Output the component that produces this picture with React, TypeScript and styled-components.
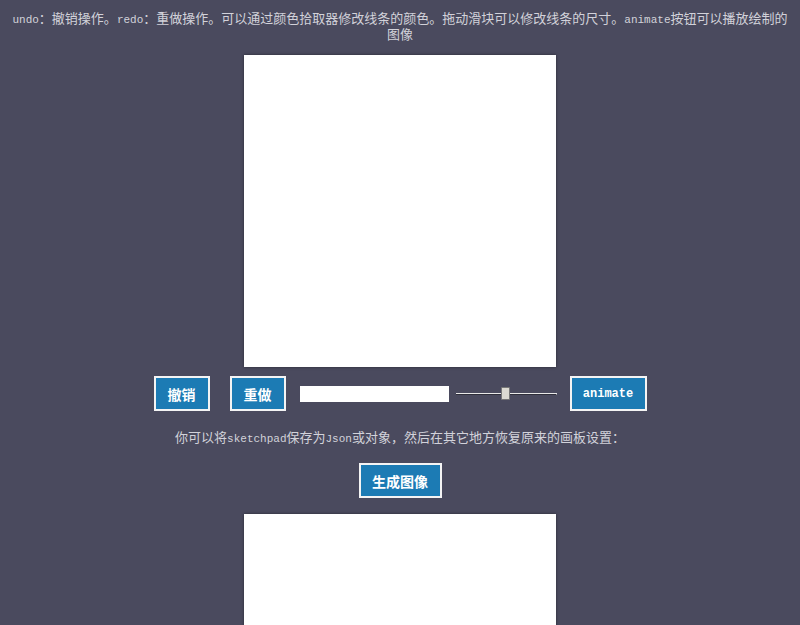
import styled, { createGlobalStyle } from "styled-components";

const GlobalStyle = createGlobalStyle`
  html, body {
    margin: 0;
    padding: 0;
    background: #4a4a5e;
  }
  body {
    font-family: "Noto Sans CJK SC", sans-serif;
  }
`;

const Page = styled.div`
  width: 800px;
  display: flex;
  flex-direction: column;
  align-items: center;
  padding-top: 10px;
`;

const Note = styled.p<{ $gap: number }>`
  margin: 0 0 ${(p) => p.$gap}px;
  padding: 0;
  color: #d2d2da;
  font-family: "Noto Sans CJK SC", sans-serif;
  font-size: 13px;
  line-height: 16px;
  text-align: center;
`;

const Latin = styled.span`
  font-family: "Liberation Mono", monospace;
  font-size: 11px;
  line-height: 1;
`;

const Pad = styled.div`
  width: 312px;
  height: 312px;
  background: #fff;
  box-shadow: 0 0 3px rgba(0, 0, 0, 0.45);
  flex-shrink: 0;
`;

const Toolbar = styled.div`
  display: flex;
  align-items: center;
  margin: 9px 0 18px;
`;

const Button = styled.button<{ $width: number; $mono?: boolean }>`
  width: ${(p) => p.$width}px;
  height: 35px;
  margin: 0 10px 0 10px;
  padding: 0;
  background: #1c7bb4;
  border: 2px solid #f4f4f4;
  color: #fff;
  font-family: ${(p) =>
    p.$mono ? `"Liberation Mono", monospace` : `"Noto Sans CJK SC", sans-serif`};
  font-size: ${(p) => (p.$mono ? 12 : 14)}px;
  font-weight: bold;
  line-height: 1;
  cursor: pointer;
`;

const TextBox = styled.input`
  width: 149px;
  height: 16px;
  margin: 0 3px 0 4px;
  padding: 0;
  border: none;
  background: #fff;
`;

const Slider = styled.input`
  -webkit-appearance: none;
  appearance: none;
  width: 101px;
  height: 16px;
  margin: 0 3px 0 4px;
  background: transparent;

  &::-webkit-slider-runnable-track {
    height: 2px;
    background: #e8e8e8;
    border-bottom: 1px solid #2e2e3a;
    border-right: 1px solid #e8e8e8;
  }

  &::-webkit-slider-thumb {
    -webkit-appearance: none;
    width: 9px;
    height: 13px;
    margin-top: -6px;
    background: #dcdad2;
    border: 1px solid #777;
    border-radius: 1px;
  }
`;

const BottomPad = styled(Pad)`
  margin-top: 16px;
`;

export default function App() {
  return (
    <>
      <GlobalStyle />
      <Page>
        <Note $gap={13}>
          <Latin>undo</Latin>：撤销操作。<Latin>redo</Latin>：重做操作。可以通过颜色拾取器修改线条的颜色。拖动滑块可以修改线条的尺寸。
          <Latin>animate</Latin>按钮可以播放绘制的
          <br />
          图像
        </Note>
        <Pad />
        <Toolbar>
          <Button $width={56}>撤销</Button>
          <Button $width={56}>重做</Button>
          <TextBox type="text" />
          <Slider type="range" min={0} max={100} defaultValue={50} />
          <Button $width={77} $mono>
            animate
          </Button>
        </Toolbar>
        <Note $gap={18}>
          你可以将<Latin>sketchpad</Latin>保存为<Latin>Json</Latin>或对象，然后在其它地方恢复原来的画板设置：
        </Note>
        <Button $width={83}>生成图像</Button>
        <BottomPad />
      </Page>
    </>
  );
}
